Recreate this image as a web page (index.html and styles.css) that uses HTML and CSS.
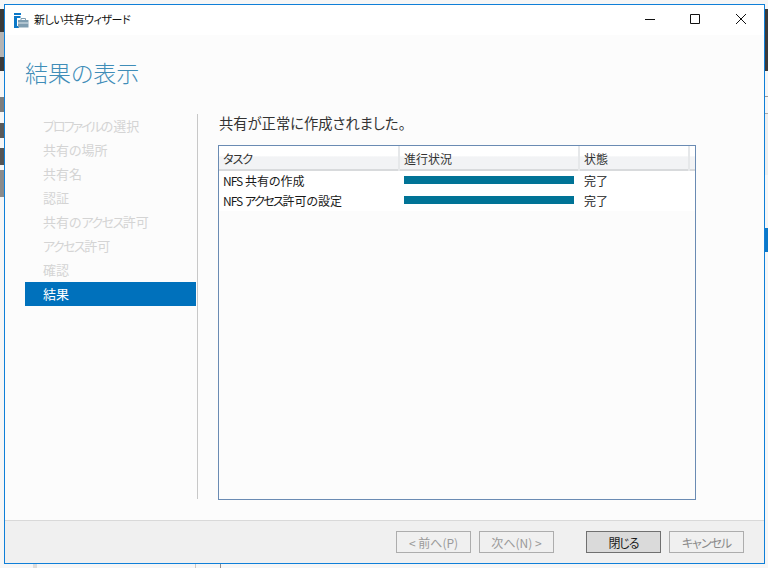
FILE: index.html
```html
<!DOCTYPE html>
<html lang="ja">
<head>
<meta charset="utf-8">
<title>新しい共有ウィザード</title>
<link rel="stylesheet" href="styles.css">
</head>
<body>
<div class="desk desk-l1"></div>
<div class="desk desk-l1b"></div>
<div class="desk desk-l2"></div>
<div class="desk desk-l3"></div>
<div class="desk desk-l4"></div>
<div class="desk desk-l5"></div>
<div class="desk desk-r1"></div>
<div class="desk desk-r2"></div>
<div class="desk desk-r3"></div>
<div class="desk desk-r4"></div>
<div class="desk desk-b1"></div>
<div class="desk desk-b2"></div>
<div class="desk desk-b3"></div>

<div class="window">
  <header class="titlebar">
    <svg class="appicon" width="15" height="15" viewBox="0 0 15 15">
      <path d="M0 0h7v2H0z" fill="#0c78c8"/>
      <path d="M0 3h3v12H0z" fill="#0c78c8"/>
      <path d="M3 3h3.500v2H3zM3 13h2v2H3z" fill="#0c78c8"/>
      <path d="M4 7h10.500v7.500H4z" fill="#7f9db0"/>
      <path d="M7 7V5.500h4.500V7" fill="none" stroke="#7f9db0"/>
      <path d="M4 10h10.500" stroke="#dfe8ee"/>
    </svg>
    <span class="title">新しい共有ウィザード</span>
    <div class="controls">
      <svg class="ctl" width="46" height="30" viewBox="0 0 46 30"><path d="M19 14.500h10" stroke="#111"/></svg>
      <svg class="ctl" width="46" height="30" viewBox="0 0 46 30"><path d="M18.500 9.500h9v9h-9z" fill="none" stroke="#111"/></svg>
      <svg class="ctl" width="46" height="30" viewBox="0 0 46 30"><path d="M18 9l10 10M28 9l-10 10" stroke="#111"/></svg>
    </div>
  </header>

  <h1 class="heading">結果の表示</h1>

  <div class="body">
    <nav class="steps">
      <div class="step"><span class="kana-tight">プロファイル</span>の選択</div>
      <div class="step">共有の場所</div>
      <div class="step">共有名</div>
      <div class="step">認証</div>
      <div class="step">共有の<span class="kana">アクセス</span>許可</div>
      <div class="step"><span class="kana">アクセス</span>許可</div>
      <div class="step">確認</div>
      <div class="step step-active">結果</div>
    </nav>
    <main class="content">
      <p class="message">共有が正常に作成されました。</p>
      <div class="list">
        <div class="row-head">
          <div class="th"><span class="kana-soft">タスク</span></div>
          <div class="th">進行状況</div>
          <div class="th">状態</div>
          <div class="th th-end"></div>
        </div>
        <div class="row">
          <div class="td"><span class="latin">NFS</span> 共有の作成</div>
          <div class="td"><div class="bar"></div></div>
          <div class="td">完了</div>
        </div>
        <div class="row">
          <div class="td"><span class="latin">NFS</span> <span class="kana">アクセス</span>許可の設定</div>
          <div class="td"><div class="bar"></div></div>
          <div class="td">完了</div>
        </div>
      </div>
    </main>
  </div>

  <footer class="footer">
    <button class="btn" disabled>&lt; 前へ(P)</button>
    <button class="btn" disabled>次へ(N) &gt;</button>
    <button class="btn btn-default">閉じる</button>
    <button class="btn btn-muted">キャンセル</button>
  </footer>
</div>
</body>
</html>
```
FILE: styles.css
```css
* { box-sizing: border-box; }
html, body { margin: 0; height: 100%; }
body {
  position: relative;
  width: 768px;
  height: 568px;
  overflow: hidden;
  background: #f6f6f6;
  font-family: "Noto Sans CJK JP", "Noto Sans", sans-serif;
  font-feature-settings: "palt";
  font-size: 12px;
  color: #1a1a1a;
}

/* the other windows behind the wizard */
.desk { position: absolute; }
.desk-l1 { left: 0; top: 9px; width: 4px; height: 62px; background: #3a3a3a; }
.desk-l1b { left: 0; top: 32px; width: 4px; height: 25px; background: #b4b4b4; }
.desk-l2 { left: 0; top: 97px; width: 4px; height: 15px; background: #7d7d7d; }
.desk-l3 { left: 0; top: 123px; width: 4px; height: 15px; background: #5a5a5a; }
.desk-l4 { left: 0; top: 148px; width: 4px; height: 17px; background: #555; }
.desk-l5 { left: 0; top: 170px; width: 4px; height: 27px; background: #8b8b8b; }
.desk-r1 { left: 765px; top: 9px; width: 3px; height: 62px; background: #3a3a3a; }
.desk-r2 { left: 765px; top: 96px; width: 3px; height: 1px; background: #999; }
.desk-r3 { left: 765px; top: 113px; width: 3px; height: 62px; background: #eee; border-top: 1px solid #aaa; }
.desk-r4 { left: 765px; top: 228px; width: 3px; height: 24px; background: #0c78c8; }
.desk-b1 { left: 33px; top: 564px; width: 4px; height: 4px; background: #dcdcdc; }
.desk-b2 { left: 195px; top: 564px; width: 1px; height: 4px; background: #c8c8c8; }
.desk-b3 { left: 220px; top: 564px; width: 1px; height: 4px; background: #8e8e8e; }

.window {
  position: absolute;
  left: 4px;
  top: 4px;
  width: 761px;
  height: 560px;
  display: flex;
  flex-direction: column;
  background: #fcfcfc;
  border: 1px solid #0f7fd8;
}

.titlebar {
  display: flex;
  align-items: center;
  flex: none;
  height: 30px;
  padding-left: 9px;
  background: #fff;
}
.appicon { flex: none; margin-right: 5px; }
.title {
  padding-bottom: 2px;
  font-size: 11px;
  letter-spacing: -0.5px;
  color: #111;
}
.controls { display: flex; margin-left: auto; }
.ctl { display: block; }

.heading {
  flex: none;
  margin: 22px 0 0 20px;
  height: 30px;
  font-size: 23px;
  line-height: 30px;
  font-weight: 300;
  color: #3f8db8;
}

.body {
  display: flex;
  flex: none;
  height: 385px;
  margin-top: 27px;
}

.steps {
  flex: none;
  width: 171px;
  margin-left: 20px;
}
.step {
  height: 24px;
  padding: 0 0 1px 18px;
  font-size: 13px;
  line-height: 23px;
  color: #d4d4d4;
}
.step-active { background: #0071bc; color: #fff; }

/* Meiryo UI sets katakana narrower than Noto does */
.kana-tight { letter-spacing: -2px; }
.kana { letter-spacing: -1.500px; }
.kana-soft { letter-spacing: -1px; }
.latin { letter-spacing: -1px; }

.content {
  flex: none;
  margin-left: 1px;
  padding-left: 20px;
  width: 499px;
  height: 385px;
  border-left: 1px solid #c8c8c8;
}
.message {
  margin: 0;
  height: 31px;
  padding-left: 1px;
  font-size: 14.300px;
  line-height: 18px;
  color: #333;
}

.list {
  width: 478px;
  height: 355px;
  border: 1px solid #6a8bb3;
}
.row-head, .row {
  display: grid;
  grid-template-columns: 181px 180px 110px 1fr;
}
.row-head {
  height: 25px;
  border-bottom: 2px solid #d8dadc;
  background: linear-gradient(#fff 0, #fff 45%, #f2f3f5 46%, #f2f3f5 100%);
}
.th {
  padding-left: 4px;
  border-right: 2px solid #e6e8ea;
  font-size: 12px;
  line-height: 25px;
  color: #333;
}
.th-end { border-right: 0; }
.row {
  height: 20px;
  background: #fff;
}
.td {
  padding-left: 4px;
  font-size: 12px;
  line-height: 20px;
  color: #1a1a1a;
}
.bar {
  width: 170px;
  height: 8px;
  margin-top: 5px;
  background: #007396;
}

.footer {
  display: flex;
  flex: none;
  align-items: flex-start;
  height: 43px;
  margin-top: auto;
  padding: 10px 0 0 391px;
  background: #f0f0f0;
  border-top: 1px solid #d9d9d9;
}
.btn {
  width: 75px;
  height: 22px;
  margin: 0 8px 0 0;
  padding: 1px 0 0;
  font: inherit;
  font-feature-settings: inherit;
  font-size: 12px;
  line-height: 18px;
  background: #f0f0f0;
  border: 1px solid #adadad;
  border-radius: 0;
  color: #9a9a9a;
}
.btn-default {
  margin-left: 24px;
  background: #dadada;
  border-color: #707070;
  color: #1a1a1a;
  letter-spacing: -1px;
}
.btn-muted { color: #8a8a8a; letter-spacing: -1px; }
```
